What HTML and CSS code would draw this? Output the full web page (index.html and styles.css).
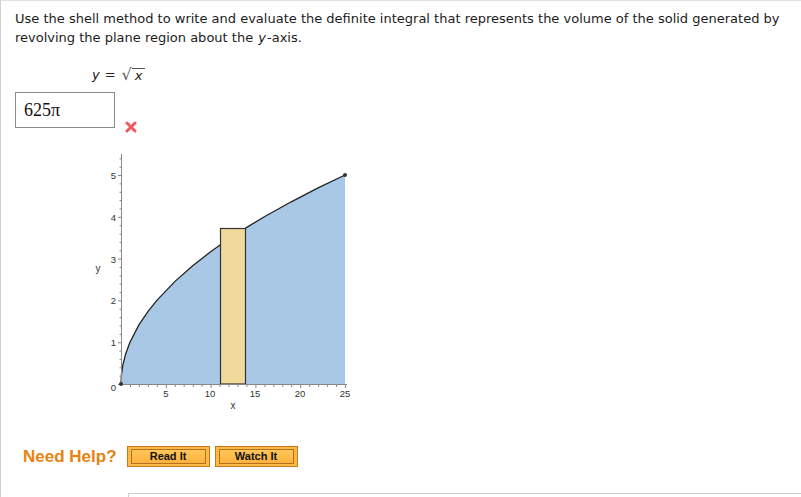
FILE: index.html
```html
<!DOCTYPE html>
<html>
<head>
<meta charset="utf-8">
<link rel="stylesheet" href="styles.css">
</head>
<body>
<div class="page">
  <p class="question">Use the shell method to write and evaluate the definite integral that represents the volume of the solid generated by revolving the plane region about the <i>y</i>-axis.</p>
  <div class="equation"><i>y</i><span class="eq">=</span><span class="root"><span class="radical">√</span><span class="radicand"><i>x</i></span></span></div>
  <div class="answer-row">
    <div class="answer-box">625π</div>
    <svg class="wrong" width="12" height="12" viewBox="0 0 12 12"><path d="M2 2 L10 10 M10 2 L2 10" stroke="#ee5a5f" stroke-width="3" stroke-linecap="round"/></svg>
  </div>
  <svg class="graph" width="270" height="268" viewBox="90 148 270 268">
    <path d="M121 384 L121.45 374.65 L122.79 365.31 L125.48 354.44 L129.96 342.2 L138.92 324.89 L147.88 311.6 L156.84 300.4 L174.76 281.61 L192.68 265.77 L210.6 251.82 L220.46 244.73 L245.54 228.16 L264.36 216.8 L291.24 201.8 L318.12 187.94 L345 175 L345 384 Z" fill="#a8c8e5"/>
    <rect x="220.5" y="228.5" width="25" height="155.5" fill="#f1d99c" stroke="#333" stroke-width="1.2"/>
    <path d="M121 384 L121.45 374.65 L122.79 365.31 L125.48 354.44 L129.96 342.2 L138.92 324.89 L147.88 311.6 L156.84 300.4 L174.76 281.61 L192.68 265.77 L210.6 251.82 L220.46 244.73 M245.54 228.16 L264.36 216.8 L291.24 201.8 L318.12 187.94 L345 175" fill="none" stroke="#222" stroke-width="1.3"/>
    <g stroke="#888" stroke-width="1">
      <line x1="121.5" y1="154" x2="121.5" y2="384"/>
      <line x1="121" y1="384.5" x2="347" y2="384.5"/>
      <path d="M118 384.5h3 M119.5 376.1h2 M119.5 367.8h2 M119.5 359.4h2 M119.5 351.1h2 M118 342.7h3 M119.5 334.4h2 M119.5 326h2 M119.5 317.7h2 M119.5 309.3h2 M118 300.9h3 M119.5 292.6h2 M119.5 284.2h2 M119.5 275.9h2 M119.5 267.5h2 M118 259.1h3 M119.5 250.8h2 M119.5 242.4h2 M119.5 234.1h2 M119.5 225.7h2 M118 217.3h3 M119.5 209h2 M119.5 200.6h2 M119.5 192.3h2 M119.5 183.9h2 M118 175.5h3 M119.5 167.2h2 M119.5 158.8h2"/>
      <path d="M130.5 385v2 M139.4 385v2 M148.4 385v2 M157.3 385v2 M166.3 385v3 M175.3 385v2 M184.2 385v2 M193.2 385v2 M202.1 385v2 M211.1 385v3 M220.1 385v2 M229 385v2 M238 385v2 M246.9 385v2 M255.9 385v3 M264.9 385v2 M273.8 385v2 M282.8 385v2 M291.7 385v2 M300.7 385v3 M309.7 385v2 M318.6 385v2 M327.6 385v2 M336.5 385v2 M345.5 385v3"/>
    </g>
    <circle cx="121" cy="384" r="2" fill="#333"/>
    <circle cx="345" cy="175" r="2" fill="#333"/>
    <g class="ticklabel" text-anchor="end">
      <text x="116" y="179">5</text>
      <text x="116" y="221">4</text>
      <text x="116" y="263">3</text>
      <text x="116" y="304">2</text>
      <text x="116" y="346">1</text>
      <text x="116" y="391">0</text>
    </g>
    <g class="ticklabel" text-anchor="middle">
      <text x="166" y="397">5</text>
      <text x="210" y="397">10</text>
      <text x="255" y="397">15</text>
      <text x="300" y="397">20</text>
      <text x="345" y="397">25</text>
    </g>
    <text class="axislabel" x="98" y="272" text-anchor="middle">y</text>
    <text class="axislabel" x="233" y="409" text-anchor="middle">x</text>
  </svg>
  <div class="help-row">
    <span class="need-help">Need Help?</span>
    <button class="help-btn"><span>Read It</span></button>
    <button class="help-btn"><span>Watch It</span></button>
  </div>
  <div class="bottom-box"></div>
</div>
</body>
</html>
```

FILE: styles.css
```css
html, body {
  margin: 0;
  padding: 0;
  background: #fff;
}
.page {
  border-left: 1px solid #d0d0d0;
  border-top: 1px solid #e0e0e0;
  height: 497px;
  box-sizing: border-box;
  overflow: hidden;
  display: flex;
  flex-direction: column;
  align-items: flex-start;
}
.page > * {
  flex-shrink: 0;
}
.question {
  margin: 0;
  padding: 8px 0 0 14px;
  font-family: "DejaVu Sans", Verdana, sans-serif;
  font-size: 13px;
  line-height: 19px;
  color: #1c1c1c;
  width: 800px;
  box-sizing: border-box;
}
.question i {
  display: inline-block;
  padding: 0 1px 0 1px;
}
.equation {
  margin: 20px 0 0 91px;
  font-family: "DejaVu Sans", Verdana, sans-serif;
  font-size: 13px;
  line-height: 16px;
  color: #222;
  display: flex;
  align-items: flex-end;
}
.eq {
  margin: 0 6px 0 5px;
}
.root {
  display: inline-flex;
  align-items: flex-end;
}
.radical {
  font-size: 16px;
  color: #555;
  line-height: 16px;
}
.radicand {
  border-top: 1px solid #555;
  padding: 0 2px 0 3px;
  line-height: 14px;
}
.answer-row {
  display: flex;
  align-items: flex-start;
  margin: 9px 0 0 14px;
}
.answer-box {
  height: 34px;
  border: 1px solid #8a8a8a;
  font-family: "Liberation Serif", "DejaVu Serif", serif;
  font-size: 18px;
  line-height: 34px;
  padding-left: 8px;
  box-sizing: content-box;
  width: 90px;
  color: #111;
}
.wrong {
  margin: 29px 0 0 10px;
}
.graph {
  display: block;
  margin: 15px 0 0 89px;
}
.ticklabel text {
  font-family: "Liberation Sans", Arial, sans-serif;
  font-size: 9.5px;
  fill: #333;
}
.axislabel {
  font-family: "Liberation Sans", Arial, sans-serif;
  font-size: 10px;
  fill: #333;
}
.help-row {
  display: flex;
  align-items: center;
  margin: 30px 0 0 22px;
}
.need-help {
  font-family: "Liberation Sans", Arial, sans-serif;
  font-weight: bold;
  font-size: 17px;
  color: #e8830f;
  margin-right: 10px;
}
.help-btn {
  margin: 0 5px 0 0;
  padding: 2px 3px;
  width: 83px;
  height: 21px;
  border: 1px solid #c9791c;
  background: #fdb946;
  display: flex;
  cursor: pointer;
}
.help-btn span {
  flex: 1;
  border: 1px solid #b5701f;
  background: linear-gradient(#ffc658, #fdb23c);
  font-family: "Liberation Sans", Arial, sans-serif;
  font-weight: bold;
  font-size: 11px;
  line-height: 13px;
  color: #111;
  text-align: center;
}
.bottom-box {
  margin: 26px 0 0 127px;
  width: 680px;
  height: 20px;
  border-top: 1px solid #cfcfcf;
  border-left: 1px solid #cfcfcf;
}
```
